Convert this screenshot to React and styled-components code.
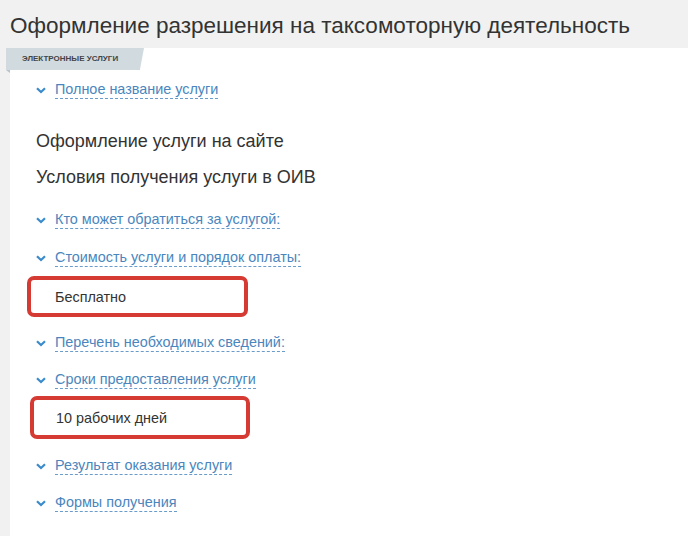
import React from "react";
import styled, { createGlobalStyle } from "styled-components";

const Global = createGlobalStyle`
  html, body { margin: 0; padding: 0; background: #f1f1f1; }
  body { font-family: Arial, "Liberation Sans", sans-serif; width: 688px; height: 536px; overflow: hidden; }
`;

const Page = styled.div`
  display: flex;
  flex-direction: column;
  height: 536px;
`;

const Header = styled.h1`
  margin: 0;
  height: 48px;
  padding: 11px 0 0 10px;
  box-sizing: border-box;
  font-size: 22.5px;
  font-weight: normal;
  color: #333;
  line-height: 30px;
`;

const Panel = styled.div`
  position: relative;
  flex: 1;
  margin-left: 10px;
  background: #fff;
  padding: 32px 0 0 26px;
`;

const Tab = styled.div`
  position: absolute;
  top: 0;
  left: -4px;
  width: 138px;
  height: 22px;
  background: #d1dadf;
  clip-path: polygon(0 0, 100% 0, 97% 100%, 0 100%);
  font-size: 8px;
  font-weight: bold;
  color: #444;
  line-height: 22px;
  padding-left: 16px;
  box-sizing: border-box;
`;

const Fold = styled.div`
  position: absolute;
  top: 22px;
  left: -4px;
  width: 4px;
  height: 3px;
  background: #b9c3c8;
  clip-path: polygon(0 0, 100% 0, 100% 100%);
`;

const Toggle = styled.div`
  display: flex;
  align-items: center;
  gap: 9px;
  height: 20px;
  margin: ${(p) => p.$mt || 0}px 0 0 0;
  color: #4a86bd;
  font-size: 14.4px;
`;

const Label = styled.span`
  border-bottom: 1px dashed #6a9ccb;
  line-height: 16px;
  padding-bottom: 1px;
`;

const Heading = styled.div`
  margin-top: ${(p) => p.$mt}px;
  font-size: 18px;
  color: #333;
  line-height: 22px;
`;

const Answer = styled.div`
  margin: ${(p) => p.$mt}px 0 0 ${(p) => p.$ml}px;
  width: ${(p) => p.$w}px;
  height: ${(p) => p.$h}px;
  box-sizing: border-box;
  border: 4px solid #d63b33;
  border-radius: 7px;
  padding-left: ${(p) => p.$pl}px;
  display: flex;
  align-items: center;
  font-size: 14.4px;
  color: #333;
`;

const Chevron = () => (
  <svg width="10" height="7" viewBox="0 0 10 7">
    <path d="M1 1.2 L5 5 L9 1.2" fill="none" stroke="#3a8bcc" strokeWidth="2.2" />
  </svg>
);

const Link = ({ children, mt }) => (
  <Toggle $mt={mt}>
    <Chevron />
    <Label>{children}</Label>
  </Toggle>
);

export default function App() {
  return (
    <Page>
      <Global />
      <Header>Оформление разрешения на таксомоторную деятельность</Header>
      <Panel>
        <Tab>ЭЛЕКТРОННЫЕ УСЛУГИ</Tab>
        <Fold />
        <Link mt={0}>Полное название услуги</Link>
        <Heading $mt={30}>Оформление услуги на сайте</Heading>
        <Heading $mt={14}>Условия получения услуги в ОИВ</Heading>
        <Link mt={22}>Кто может обратиться за услугой:</Link>
        <Link mt={18}>Стоимость услуги и порядок оплаты:</Link>
        <Answer $mt={8} $ml={-9} $w={221} $h={41} $pl={24}>Бесплатно</Answer>
        <Link mt={16}>Перечень необходимых сведений:</Link>
        <Link mt={17}>Сроки предоставления услуги</Link>
        <Answer $mt={6} $ml={-6} $w={220} $h={43} $pl={22}>10 рабочих дней</Answer>
        <Link mt={17}>Результат оказания услуги</Link>
        <Link mt={17}>Формы получения</Link>
      </Panel>
    </Page>
  );
}
